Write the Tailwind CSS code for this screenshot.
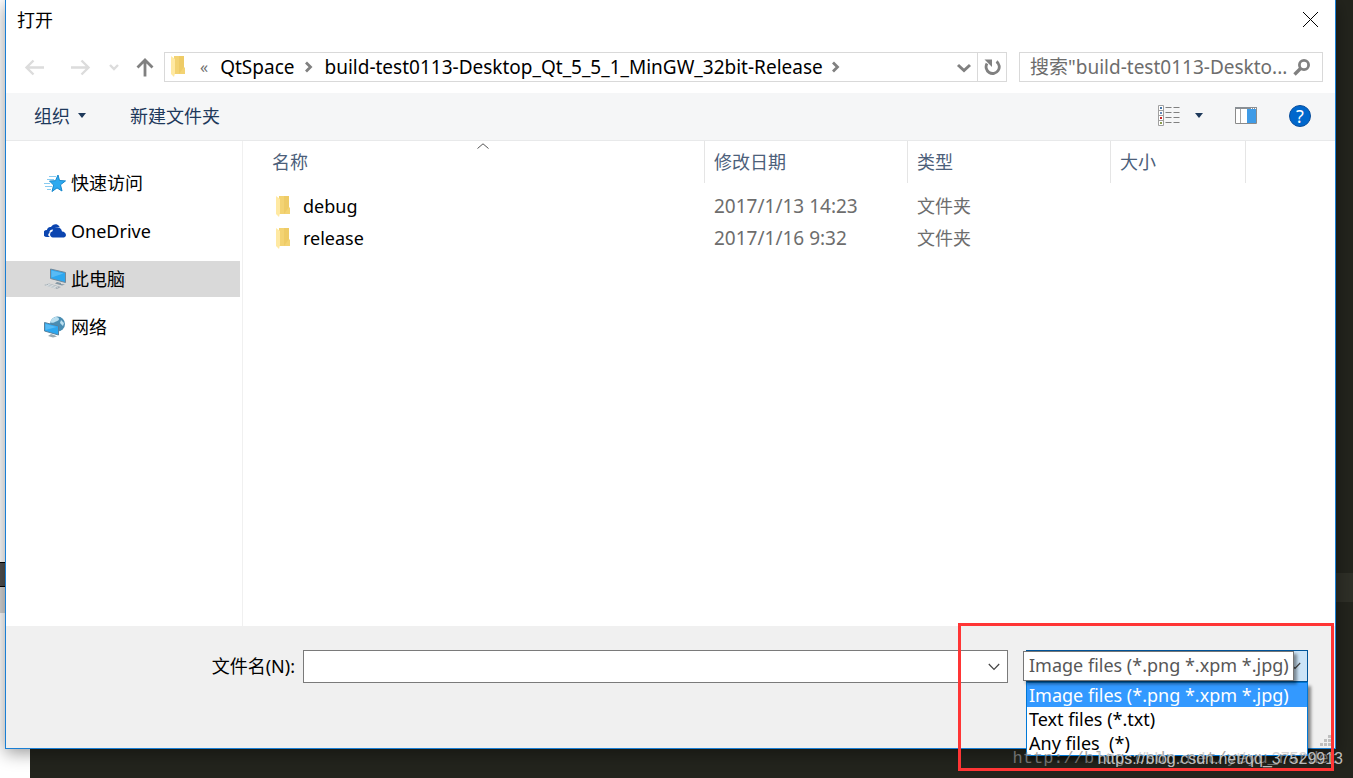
<!DOCTYPE html>
<html lang="zh-CN">
<head>
    <meta charset="UTF-8">
    <meta name="viewport" content="width=device-width, initial-scale=1.0">
    <title>打开</title>
    <script src="https://cdn.jsdelivr.net/npm/@tailwindcss/browser@4"></script>
</head>
<body class="relative flex h-screen flex-col overflow-hidden bg-white font-['Noto_Sans','Noto_Sans_CJK_SC',sans-serif] text-[18px] leading-6 text-black">
    <!-- desktop behind the dialog -->
    <div class="absolute inset-y-0 right-0 left-[30px] bg-[#23241d]"></div>
    <div class="absolute top-[573px] right-0 h-[29px] w-5 bg-[#2e2f27]"></div>
    <div class="absolute top-[562px] left-0 h-[25px] w-[5px] border-y border-black bg-[#505050]"></div>
    <div class="absolute top-[587px] left-0 h-[26px] w-[5px] bg-[#d4d4d4]"></div>

    <main class="relative mr-[17px] mb-[29px] ml-[5px] flex flex-1 flex-col border-x border-b border-[#1a7fd4] bg-white shadow-[0_4px_16px_rgba(0,0,0,0.4)]">
        <header class="flex h-[39px] items-center justify-between pr-[17px] pl-[11px]">
            <h1>打开</h1>
            <button type="button" aria-label="关闭" class="block">
                <svg class="size-[15px]" viewBox="0 0 15 15" fill="none" stroke="#000"><path d="M0 0l15 15M15 0L0 15"/></svg>
            </button>
        </header>

        <nav class="flex h-[54px] items-center pt-[2px] pr-3 pl-[18px]">
            <button type="button" aria-label="后退"><svg class="h-5 w-[22px]" viewBox="0 0 22 20" fill="none" stroke="#dcdcdc" stroke-width="2.4"><path d="M20 10.500H2.500M9.500 3.500l-7 7 7 7"/></svg></button>
            <button type="button" aria-label="前进" class="ml-6"><svg class="h-5 w-[22px]" viewBox="0 0 22 20" fill="none" stroke="#dcdcdc" stroke-width="2.4"><path d="M1 10.500h17.500M11.500 3.500l7 7-7 7"/></svg></button>
            <button type="button" aria-label="最近浏览的位置" class="ml-4"><svg class="size-3" viewBox="0 0 12 12" fill="none" stroke="#dcdcdc" stroke-width="2.4"><path d="M2 4l4 4 4-4"/></svg></button>
            <button type="button" aria-label="上移" class="ml-4"><svg class="h-5 w-[18px]" viewBox="0 0 18 20" fill="none" stroke="#808080" stroke-width="2.8"><path d="M9 19.500V3M1.500 10.500L9 3l7.500 7.500"/></svg></button>
            <div class="ml-[10px] flex h-[30px] flex-1 items-center border border-[#d9d9d9] text-[19px] whitespace-nowrap">
                <svg class="ml-[5px] h-[22px] w-4" viewBox="0 0 16 22"><path d="M4 0h10v11l1 1v6H4z" fill="#f3d373"/><path d="M9 0h5v11L9 18z" fill="#eecb66"/><path d="M1 0l4 3v14l-1 4-3-3z" fill="#ffe9a2"/></svg>
                <span class="ml-[14px] text-[16px] text-[#707070]">«</span>
                <button type="button" class="ml-3">QtSpace</button>
                <svg class="ml-[10px] h-3 w-[10px]" viewBox="0 0 10 12" fill="none" stroke="#808080" stroke-width="2.8"><path d="M2 1.500L6.500 6 2 10.500"/></svg>
                <button type="button" class="ml-[10px]">build-test0113-Desktop_Qt_5_5_1_MinGW_32bit-Release</button>
                <svg class="ml-2 h-3 w-[10px]" viewBox="0 0 10 12" fill="none" stroke="#808080" stroke-width="2.8"><path d="M2 1.500L6.500 6 2 10.500"/></svg>
                <button type="button" aria-label="以前的位置" class="mr-[5px] ml-auto"><svg class="h-3 w-4" viewBox="0 0 16 12" fill="none" stroke="#808080" stroke-width="3"><path d="M2 4l6 5.500L14 4"/></svg></button>
                <button type="button" aria-label="刷新" class="flex h-full w-[29px] items-center justify-center border-l border-[#d9d9d9]"><svg class="size-[18px]" viewBox="0 0 18 18"><path d="M13.500 3.500A6.600 6.600 0 1 1 4 5.500" fill="none" stroke="#808080" stroke-width="2.8"/><path d="M1.500 1.500h7.500v7.500z" fill="#808080"/></svg></button>
            </div>
            <div class="ml-3 flex h-[30px] w-[304px] items-center border border-[#d9d9d9] pr-3 pl-[10px] text-[19px]">
                <input type="text" aria-label="搜索" placeholder="搜索&quot;build-test0113-Deskto..." class="min-w-0 flex-1 outline-none placeholder:text-[#6d6d6d]">
                <svg class="size-[17px]" viewBox="0 0 17 17" fill="none" stroke="#808080"><circle cx="11" cy="6" r="4.600" stroke-width="2.800"/><path d="M8 9L1.500 15.500" stroke-width="3.400"/></svg>
            </div>
        </nav>

        <div class="flex h-12 items-center border-b border-[#e8e9ea] bg-[#f5f6f7] pr-6 pb-[2px] pl-7 text-[#1e395b]">
            <button type="button" class="flex items-center gap-2">组织<svg class="h-[5px] w-2" viewBox="0 0 8 5" fill="#1e395b"><path d="M0 0h8L4 5z"/></svg></button>
            <button type="button" class="ml-11">新建文件夹</button>
            <button type="button" aria-label="更改您的视图" class="ml-auto flex items-center gap-[15px]">
                <svg class="h-[21px] w-[22px]" viewBox="0 0 22 21" fill="none"><path d="M.5.5h5v20h-5zM.5 5.500h5M.5 10.500h5M.5 15.500h5" stroke="#a0a0a0" fill="#fff"/><path d="M7.500 2.500h6m2 0h6M7.500 7.500h6m2 0h6M7.500 12.500h6m2 0h6M7.500 17.500h6m2 0h6" stroke="#808080"/><path d="M2 2h2v2H2z" fill="#4677a8"/><path d="M2 7h2v2H2z" fill="#6489b8"/><path d="M2 12h2v2H2z" fill="#c22"/><path d="M2 17h2v2H2z" fill="#8b9c4e"/></svg>
                <svg class="h-[5px] w-2" viewBox="0 0 8 5" fill="#1e395b"><path d="M0 0h8L4 5z"/></svg>
            </button>
            <button type="button" aria-label="显示预览窗格" class="ml-8"><svg class="h-[17px] w-[22px]" viewBox="0 0 22 17"><path d="M.5.5h21v16H.5z" fill="#fff" stroke="#8a8a8a"/><path d="M0 0h22v2H0z" fill="#8a8f94"/><path d="M16 1h1v1h-1zM18 1h1v1h-1zM20 1h1v1h-1z" fill="#fff"/><path d="M5.500 2v14" stroke="#a5a5a5"/><path d="M12 2h9v14h-9z" fill="#3f9be6"/></svg></button>
            <button type="button" aria-label="获取帮助" class="ml-8 flex size-[22px] items-center justify-center rounded-full border border-[#0a4e9c] bg-[#0067cc] text-[18px] leading-none text-white">?</button>
        </div>

        <div class="flex min-h-0 flex-1">
            <ul class="mr-[2px] flex w-[234px] flex-col gap-3 pt-6">
                <li><a href="#" class="flex h-9 items-center gap-[5px] pl-[38px]"><svg class="size-[22px]" viewBox="0 0 22 22"><path d="M14 3l1.500 5.500 6 .4-5 3.900 1.500 6.200-5-3.100-5 3.600 1.600-6.400L5.500 9l6-.3z" fill="#2eaaf0" stroke="#1688cd"/><path d="M5 4.500h7M3 7.500h7M0 11.500h6M1 14.500h7M3 17.500h4" stroke="#7cc5ee" stroke-width=".9"/></svg>快速访问</a></li>
                <li><a href="#" class="flex h-9 items-center gap-[5px] pl-[38px]"><svg class="size-[22px]" viewBox="0 0 22 22" fill="#0b45b0"><path d="M6 17H3a3.500 3.500 0 0 1 0-7c0-2 2-3.500 4-3 1.500-3 6-4 8-1l1 1.500c-3-1-5 0-6 2-3-.5-5 1-4.500 3.500C3.500 14 4 16 6 17z"/><path d="M9 17.500a3.200 3.200 0 0 1-.5-6.300c.5-5.200 8.500-5.200 9.500.3 4 0 5.500 5 2 6z"/></svg>OneDrive</a></li>
                <li><a href="#" aria-current="true" class="flex h-9 items-center gap-[5px] bg-[#d9d9d9] pl-[38px]"><svg class="size-[22px]" viewBox="0 0 22 22"><path d="M6.500 1l15 3.500v10l-15-4z" fill="#2da7ef" stroke="#70889a"/><path d="M7.500 2.500l12 3L7.500 9.500z" fill="#58bbf5"/><path d="M13 14l4 1v1l4 .5-3 1-7-2z" fill="#8296a3"/><path d="M0 17l5-1.500 12 3.500-4 2z" fill="#a3adb4"/><path d="M2 17l10 3M4 16.200l10 3" stroke="#e8edf0" stroke-width=".8"/></svg>此电脑</a></li>
                <li><a href="#" class="flex h-9 items-center gap-[5px] pl-[38px]"><svg class="size-[22px]" viewBox="0 0 22 22"><circle cx="13.500" cy="8" r="7.500" fill="#4a8db2"/><path d="M8 3c3-3 7-2 7 0s-3 2-4 3-4 1-5 0zM17 4l3 3-1 3-3-3z" fill="#b9dff0"/><path d="M.5 6.500l14 3.500v9L.5 15z" fill="#2da7ef" stroke="#59809b"/><path d="M1.500 8l11 3-11 3z" fill="#58bbf5"/><path d="M7 18l3 1 3 1.500-4 1-5-1.500z" fill="#99a9b2"/></svg>网络</a></li>
            </ul>
            <div class="relative flex-1 border-l border-[#f0f0f0]">
                <svg class="absolute top-[2px] left-[234px] h-[6px] w-3" viewBox="0 0 12 6" fill="none" stroke="#555"><path d="M.5 5.500L6 .8l5.500 4.700"/></svg>
                <table class="w-full table-fixed text-left whitespace-nowrap">
                    <colgroup>
                        <col class="w-[462px]"><col class="w-[203px]"><col class="w-[203px]"><col class="w-[135px]"><col>
                    </colgroup>
                    <thead class="text-[#4c607a]">
                        <tr>
                            <th class="p-0 pb-[7px] font-normal"><div class="flex h-[42px] items-center border-r border-[#e5e5e5] pl-[29px]">名称</div></th>
                            <th class="p-0 pb-[7px] font-normal"><div class="flex h-[42px] items-center border-r border-[#e5e5e5] pl-[9px]">修改日期</div></th>
                            <th class="p-0 pb-[7px] font-normal"><div class="flex h-[42px] items-center border-r border-[#e5e5e5] pl-[9px]">类型</div></th>
                            <th class="p-0 pb-[7px] font-normal"><div class="flex h-[42px] items-center border-r border-[#e5e5e5] pl-[9px]">大小</div></th>
                            <td></td>
                        </tr>
                    </thead>
                    <tbody class="text-[#6d6d6d]">
                        <tr class="h-8">
                            <td class="p-0 text-black"><div class="flex items-center gap-3 pl-8"><svg class="h-[22px] w-4" viewBox="0 0 16 22"><path d="M4 1h10v11l1 1v6H4z" fill="#f3d373"/><path d="M9 1h5v11L9 19z" fill="#eecb66"/><path d="M1 1l4 3v14l-1 4-3-3z" fill="#ffe9a2"/></svg>debug</div></td>
                            <td class="p-0 pl-[9px] text-[19px]">2017/1/13 14:23</td>
                            <td class="p-0 pl-[9px]">文件夹</td>
                            <td></td>
                            <td></td>
                        </tr>
                        <tr class="h-8">
                            <td class="p-0 text-black"><div class="flex items-center gap-3 pl-8"><svg class="h-[22px] w-4" viewBox="0 0 16 22"><path d="M4 1h10v11l1 1v6H4z" fill="#f3d373"/><path d="M9 1h5v11L9 19z" fill="#eecb66"/><path d="M1 1l4 3v14l-1 4-3-3z" fill="#ffe9a2"/></svg>release</div></td>
                            <td class="p-0 pl-[9px] text-[19px]">2017/1/16 9:32</td>
                            <td class="p-0 pl-[9px]">文件夹</td>
                            <td></td>
                            <td></td>
                        </tr>
                    </tbody>
                </table>
            </div>
        </div>

        <footer class="relative flex h-[122px] items-start bg-[#f0f0f0] pt-6 pr-[27px]">
            <label for="filename" class="w-[289px] pt-1 text-right">文件名(N):</label>
            <div class="ml-2 flex h-[33px] flex-1 items-center border border-[#7a7a7a] bg-white">
                <input id="filename" type="text" class="h-full min-w-0 flex-1 px-1 outline-none">
                <button type="button" aria-label="历史记录" class="mr-[7px]"><svg class="h-2 w-3" viewBox="0 0 12 8" fill="none" stroke="#444" stroke-width="1.200"><path d="M.8 1L6 6.500 11.200 1"/></svg></button>
            </div>
            <div class="relative ml-[18px] w-[282px]">
                <select aria-label="文件类型" class="block h-8 w-full appearance-none border border-[#005499] bg-[#cce4f7] pl-[2px] outline-none">
                    <option>Image files (*.png *.xpm *.jpg)</option>
                    <option>Text files (*.txt)</option>
                    <option>Any files  (*)</option>
                </select>
                <svg class="pointer-events-none absolute top-3 right-[7px] h-2 w-3" viewBox="0 0 12 8" fill="none" stroke="#444" stroke-width="1.200"><path d="M.8 1L6 6.500 11.200 1"/></svg>
                <ul role="listbox" aria-label="文件类型" class="absolute top-8 left-0 w-full border border-[#0078d7] bg-white shadow-[3px_4px_3px_rgba(0,0,0,0.45)]">
                    <li role="option" aria-selected="true" class="bg-[#3399ff] pl-[2px] text-white">Image files (*.png *.xpm *.jpg)</li>
                    <li role="option" aria-selected="false" class="pl-[2px]">Text files (*.txt)</li>
                    <li role="option" aria-selected="false" class="pl-[2px] whitespace-pre">Any files  (*)</li>
                </ul>
                <div role="tooltip" class="absolute top-px -left-[3px] h-[30px] w-[271px] border border-[#767676] bg-white pt-px pl-[5px] whitespace-nowrap text-[#575757] shadow-[3px_3px_3px_rgba(0,0,0,0.4)]">Image files (*.png *.xpm *.jpg)</div>
            </div>
            <!-- resize grip -->
            <svg class="absolute right-1 bottom-[2px] size-[11px]" viewBox="0 0 11 11" fill="#bfbfbf"><path d="M8 0h3v3H8zM4 4h3v3H4zM8 4h3v3H8zM0 8h3v3H0zM4 8h3v3H4zM8 8h3v3H8z"/></svg>
        </footer>
    </main>

    <p class="absolute right-[14px] bottom-[7px] font-['Liberation_Mono',monospace] text-[17px] leading-6 text-[#8a8a8a]/75">http://blog.csdn.net/yeyu_rardet</p>
    <p class="absolute right-[10px] bottom-[7px] font-['Liberation_Sans',sans-serif] text-[16px] leading-6 text-[#d0d0d0]/90">https://blog.csdn.net/qq_37529913</p>
    <div class="pointer-events-none absolute right-[19px] bottom-[7px] h-[148px] w-[376px] border-3 border-[#ff3535]"></div>
</body>
</html>
